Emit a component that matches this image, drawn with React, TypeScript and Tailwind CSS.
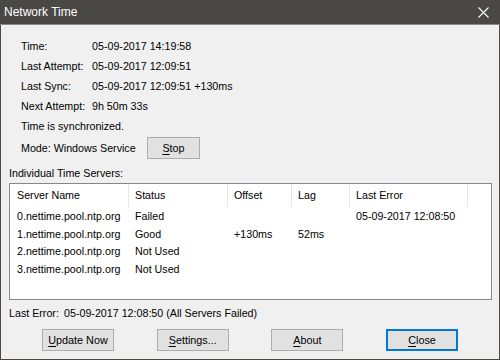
import React from "react";

const font = { fontFamily: '"Liberation Sans", Arial, sans-serif' };

function Btn({
  w,
  pre,
  u,
  post,
  def,
}: {
  w: string;
  pre?: string;
  u: string;
  post: string;
  def?: boolean;
}) {
  return (
    <div
      className={`${w} h-[22px] flex items-center justify-center bg-[#e1e1e1] text-[10.8px] text-black ${
        def ? "border-2 border-[#0078d7]" : "border border-[#adadad]"
      }`}
    >
      <span>
        {pre}
        <span className="underline underline-offset-[2px]">{u}</span>
        {post}
      </span>
    </div>
  );
}

const rows = [
  ["0.nettime.pool.ntp.org", "Failed", "", "", "05-09-2017 12:08:50"],
  ["1.nettime.pool.ntp.org", "Good", "+130ms", "52ms", ""],
  ["2.nettime.pool.ntp.org", "Not Used", "", "", ""],
  ["3.nettime.pool.ntp.org", "Not Used", "", "", ""],
];

const cols = ["w-[119px] pl-[7px]", "w-[99px] pl-[6px]", "w-[64px] pl-[6px]", "w-[58px] pl-[6px]", "w-[118px] pl-[6px]"];

export default function App() {
  return (
    <div
      className="w-[500px] h-[360px] flex flex-col bg-[#f0f0f0] border-x border-b border-[#4a4845] text-black"
      style={font}
    >
      <div className="h-[25px] shrink-0 -mx-px bg-[#4a4845] flex items-center justify-between pl-[4px] pr-[11px] border-b border-[#8a8886]">
        <span className="text-white text-[12px] leading-none">Network Time</span>
        <svg width="11" height="11" viewBox="0 0 11 11">
          <path d="M0.5 0.5 L10.5 10.5 M10.5 0.5 L0.5 10.5" stroke="#ffffff" strokeWidth="1.1" />
        </svg>
      </div>
      <div className="flex flex-col px-[8px] pt-[11px] text-[10.7px]">
        <div className="flex flex-col pl-[12px]">
          {[
            ["Time:", "05-09-2017 14:19:58"],
            ["Last Attempt:", "05-09-2017 12:09:51"],
            ["Last Sync:", "05-09-2017 12:09:51 +130ms"],
            ["Next Attempt:", "9h 50m 33s"],
          ].map(([l, v]) => (
            <div key={l} className="h-[20px] flex items-center">
              <span className="w-[71px]">{l}</span>
              <span>{v}</span>
            </div>
          ))}
          <div className="h-[20px] flex items-center">Time is synchronized.</div>
          <div className="h-[22px] mt-px flex items-center">
            <span className="w-[126px]">Mode: Windows Service</span>
            <Btn w="w-[53px]" u="S" post="top" />
          </div>
        </div>
        <div className="h-[16px] mt-[6px] flex items-center">Individual Time Servers:</div>
        <div className="mt-[2px] w-[483px] h-[117px] border border-[#828790] bg-white flex flex-col">
          <div className="h-[23px] flex">
            {["Server Name", "Status", "Offset", "Lag", "Last Error"].map((h, i) => (
              <div key={h} className={`${cols[i]} h-full flex items-center border-r border-[#e5e5e5]`}>
                {h}
              </div>
            ))}
          </div>
          {rows.map((r) => (
            <div key={r[0]} className="h-[17.7px] flex">
              {r.map((c, i) => (
                <div key={i} className={`${cols[i]} h-full flex items-center whitespace-nowrap`}>
                  {c}
                </div>
              ))}
            </div>
          ))}
        </div>
        <div className="h-[16px] mt-[5px] flex items-center">
          <span className="w-[55px]">Last Error:</span>
          <span>05-09-2017 12:08:50 (All Servers Failed)</span>
        </div>
        <div className="mt-[8px] ml-[33px] flex gap-[42.7px]">
          <Btn w="w-[72px]" u="U" post="pdate Now" />
          <Btn w="w-[72px]" u="S" post="ettings..." />
          <Btn w="w-[72px]" u="A" post="bout" />
          <Btn w="w-[72px]" u="C" post="lose" def />
        </div>
      </div>
    </div>
  );
}
